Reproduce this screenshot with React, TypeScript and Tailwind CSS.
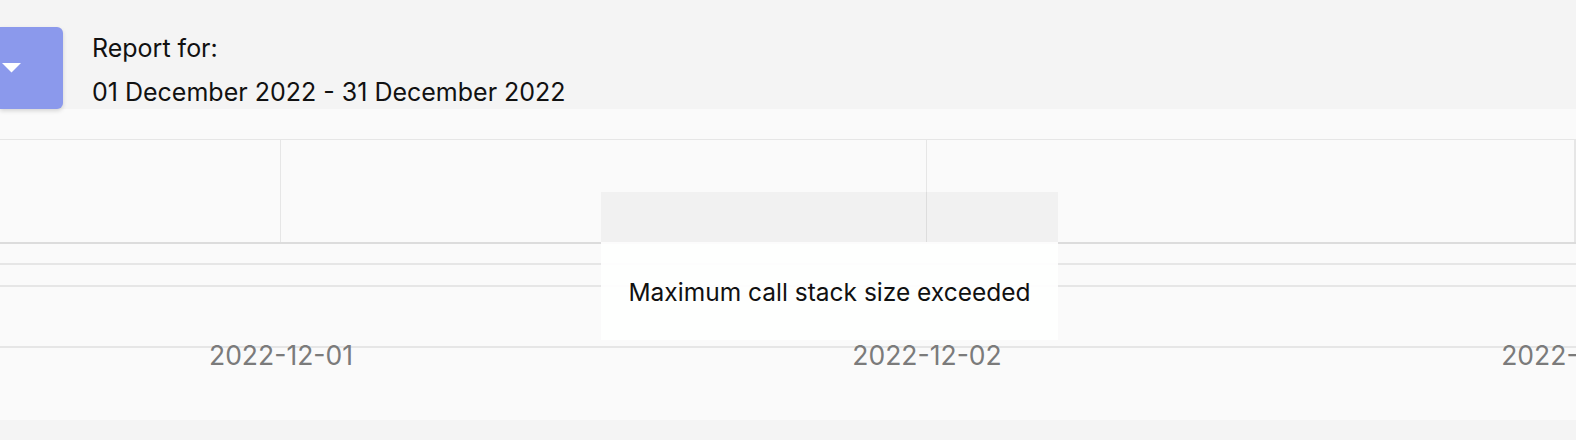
export default function App() {
  const columns = [
    { width: 281, label: "2022-12-01" },
    { width: 646, label: "2022-12-02" },
    { width: 649, label: "2022-12-03" },
  ]

  return (
    <div className="relative h-[440px] w-[1576px] overflow-hidden bg-[#f4f4f4] font-['Inter',sans-serif]">
      {/* header */}
      <div className="flex h-[109px] items-end">
        <button className="flex h-[82px] w-[63px] items-center rounded-r-md bg-[#8b99ec] pl-[2px] shadow-[0_2px_4px_rgba(0,0,0,0.15)]">
          <svg width="19" height="10" viewBox="0 0 19 10">
            <polygon points="0,0 19,0 9.5,9.5" fill="#ffffff" />
          </svg>
        </button>
        <div className="ml-[29px] flex h-full flex-col pt-[29px] text-[25px] text-[#111]">
          <span className="leading-[38px]">Report for:</span>
          <span className="mt-[3px] leading-[44px]">01 December 2022 - 31 December 2022</span>
        </div>
      </div>

      {/* chart panel */}
      <div className="h-[311px] bg-[#fafafa] pt-[30px]">
        <div className="flex h-[105px] border-t border-b-2 border-t-[#e6e6e6] border-b-[#dcdcdc]">
          {columns.map((col, i) => (
            <div
              key={i}
              style={{ width: col.width }}
              className="shrink-0 border-r border-[#e6e6e6] last:border-r-2"
            />
          ))}
        </div>
        <div className="h-[21px] border-b-2 border-[#e6e6e6]" />
        <div className="h-[22px] border-b-2 border-[#e6e6e6]" />
        <div className="h-[61px] border-b-2 border-[#e6e6e6]" />
        <div className="flex">
          {columns.map((col, i) => (
            <div key={i} style={{ width: col.width }} className="relative h-0 shrink-0">
              <span className="absolute right-0 top-[-11px] translate-x-1/2 whitespace-nowrap text-[26.5px] leading-[36px] text-[#7b7b7b]">
                {col.label}
              </span>
            </div>
          ))}
        </div>
      </div>

      {/* error tooltip */}
      <div className="absolute left-[601px] top-[192px] flex w-[457px] flex-col">
        <div className="h-[50px] bg-[rgba(0,0,0,0.035)]" />
        <div className="flex h-[98px] items-center justify-center bg-white/90 pt-[3px] text-[24.5px] text-[#111]">
          Maximum call stack size exceeded
        </div>
      </div>
    </div>
  )
}
